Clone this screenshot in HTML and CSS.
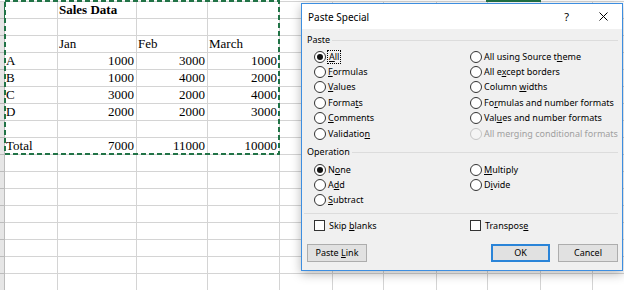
FILE: index.html
```html
<!DOCTYPE html>
<html>
<head>
<meta charset="utf-8">
<link rel="stylesheet" href="styles.css">
</head>
<body>
<div class="page">
  <div class="sheet">
    <div class="stub sel"></div><div class="c"></div><div class="c b">Sales Data</div><div class="c"></div><div class="c"></div><div class="c"></div><div class="c"></div><div class="c"></div><div class="c"></div><div class="c"></div><div class="c"></div><div class="c"></div>
    <div class="stub"></div><div class="c"></div><div class="c"></div><div class="c"></div><div class="c"></div><div class="c"></div><div class="c"></div><div class="c"></div><div class="c"></div><div class="c"></div><div class="c"></div><div class="c"></div>
    <div class="stub"></div><div class="c"></div><div class="c">Jan</div><div class="c">Feb</div><div class="c">March</div><div class="c"></div><div class="c"></div><div class="c"></div><div class="c"></div><div class="c"></div><div class="c"></div><div class="c"></div>
    <div class="stub"></div><div class="c">A</div><div class="c n">1000</div><div class="c n">3000</div><div class="c n">1000</div><div class="c"></div><div class="c"></div><div class="c"></div><div class="c"></div><div class="c"></div><div class="c"></div><div class="c"></div>
    <div class="stub"></div><div class="c">B</div><div class="c n">1000</div><div class="c n">4000</div><div class="c n">2000</div><div class="c"></div><div class="c"></div><div class="c"></div><div class="c"></div><div class="c"></div><div class="c"></div><div class="c"></div>
    <div class="stub"></div><div class="c">C</div><div class="c n">3000</div><div class="c n">2000</div><div class="c n">4000</div><div class="c"></div><div class="c"></div><div class="c"></div><div class="c"></div><div class="c"></div><div class="c"></div><div class="c"></div>
    <div class="stub"></div><div class="c">D</div><div class="c n">2000</div><div class="c n">2000</div><div class="c n">3000</div><div class="c"></div><div class="c"></div><div class="c"></div><div class="c"></div><div class="c"></div><div class="c"></div><div class="c"></div>
    <div class="stub"></div><div class="c"></div><div class="c"></div><div class="c"></div><div class="c"></div><div class="c"></div><div class="c"></div><div class="c"></div><div class="c"></div><div class="c"></div><div class="c"></div><div class="c"></div>
    <div class="stub"></div><div class="c">Total</div><div class="c n">7000</div><div class="c n">11000</div><div class="c n">10000</div><div class="c"></div><div class="c"></div><div class="c"></div><div class="c"></div><div class="c"></div><div class="c"></div><div class="c"></div>
    <div class="stub"></div><div class="c"></div><div class="c"></div><div class="c"></div><div class="c"></div><div class="c"></div><div class="c"></div><div class="c"></div><div class="c"></div><div class="c"></div><div class="c"></div><div class="c"></div>
    <div class="stub"></div><div class="c"></div><div class="c"></div><div class="c"></div><div class="c"></div><div class="c"></div><div class="c"></div><div class="c"></div><div class="c"></div><div class="c"></div><div class="c"></div><div class="c"></div>
    <div class="stub"></div><div class="c"></div><div class="c"></div><div class="c"></div><div class="c"></div><div class="c"></div><div class="c"></div><div class="c"></div><div class="c"></div><div class="c"></div><div class="c"></div><div class="c"></div>
    <div class="stub"></div><div class="c"></div><div class="c"></div><div class="c"></div><div class="c"></div><div class="c"></div><div class="c"></div><div class="c"></div><div class="c"></div><div class="c"></div><div class="c"></div><div class="c"></div>
    <div class="stub"></div><div class="c"></div><div class="c"></div><div class="c"></div><div class="c"></div><div class="c"></div><div class="c"></div><div class="c"></div><div class="c"></div><div class="c"></div><div class="c"></div><div class="c"></div>
    <div class="stub"></div><div class="c"></div><div class="c"></div><div class="c"></div><div class="c"></div><div class="c"></div><div class="c"></div><div class="c"></div><div class="c"></div><div class="c"></div><div class="c"></div><div class="c"></div>
    <div class="stub"></div><div class="c"></div><div class="c"></div><div class="c"></div><div class="c"></div><div class="c"></div><div class="c"></div><div class="c"></div><div class="c"></div><div class="c"></div><div class="c"></div><div class="c"></div>
    <div class="stub"></div><div class="c"></div><div class="c"></div><div class="c"></div><div class="c"></div><div class="c"></div><div class="c"></div><div class="c"></div><div class="c"></div><div class="c"></div><div class="c"></div><div class="c"></div>
  </div>

  <svg class="ants" width="276" height="155" viewBox="0 0 276 155">
    <rect x="1" y="1" width="274" height="153" fill="none" stroke="#217346" stroke-width="2" stroke-dasharray="5 3"/>
  </svg>
  <div class="active-cell"></div>

  <div class="dialog">
    <div class="titlebar">
      <span class="title">Paste Special</span>
      <span class="help">?</span>
      <svg class="close" width="9" height="9" viewBox="0 0 9 9"><path d="M0.5 0.5 L8.5 8.5 M8.5 0.5 L0.5 8.5" stroke="#000" stroke-width="1"/></svg>
    </div>
    <div class="body">
      <div class="group"><span>Paste</span><i class="rule"></i></div>
      <div class="options paste">
        <label class="opt"><span class="radio on"></span><span class="focus"><u>A</u>ll</span></label>
        <label class="opt"><span class="radio"></span><span>All using Source t<u>h</u>eme</span></label>
        <label class="opt"><span class="radio"></span><span><u>F</u>ormulas</span></label>
        <label class="opt"><span class="radio"></span><span>All e<u>x</u>cept borders</span></label>
        <label class="opt"><span class="radio"></span><span><u>V</u>alues</span></label>
        <label class="opt"><span class="radio"></span><span>Column <u>w</u>idths</span></label>
        <label class="opt"><span class="radio"></span><span>Forma<u>t</u>s</span></label>
        <label class="opt"><span class="radio"></span><span>Fo<u>r</u>mulas and number formats</span></label>
        <label class="opt"><span class="radio"></span><span><u>C</u>omments</span></label>
        <label class="opt"><span class="radio"></span><span>Val<u>u</u>es and number formats</span></label>
        <label class="opt"><span class="radio"></span><span>Validatio<u>n</u></span></label>
        <label class="opt off"><span class="radio"></span><span>All merging conditional formats</span></label>
      </div>
      <div class="group op"><span>Operation</span><i class="rule"></i></div>
      <div class="options operation">
        <label class="opt"><span class="radio on"></span><span>N<u>o</u>ne</span></label>
        <label class="opt"><span class="radio"></span><span><u>M</u>ultiply</span></label>
        <label class="opt"><span class="radio"></span><span>A<u>d</u>d</span></label>
        <label class="opt"><span class="radio"></span><span>D<u>i</u>vide</span></label>
        <label class="opt"><span class="radio"></span><span><u>S</u>ubtract</span></label>
      </div>
      <div class="sep"></div>
      <div class="options checks">
        <label class="opt"><span class="check"></span><span>Skip <u>b</u>lanks</span></label>
        <label class="opt"><span class="check"></span><span>Transpos<u>e</u></span></label>
      </div>
      <div class="buttons">
        <button class="btn link">Paste <u>L</u>ink</button>
        <span class="spacer"></span>
        <button class="btn ok">OK</button>
        <button class="btn cancel">Cancel</button>
      </div>
    </div>
  </div>
</div>
</body>
</html>
```

FILE: styles.css
```css
* { box-sizing: border-box; }
html, body { margin: 0; padding: 0; background: #fff; }
.page {
  position: relative;
  width: 624px;
  height: 290px;
  overflow: hidden;
}
.sheet {
  display: grid;
  grid-template-columns: 5px 53px 79px 71px 72px 53px 51px 53px 51px 53px 52px 52px;
  grid-auto-rows: 17px;
  margin-top: 1px;
  border-top: 1px solid #d4d4d4;
  font-family: "Liberation Serif", "Times New Roman", serif;
  font-size: 13px;
  color: #000;
}
.stub {
  background: #e6e6e6;
  border-right: 1px solid #bcbcbc;
  border-bottom: 1px solid #bcbcbc;
}
.stub.sel { border-right-color: #217346; }
.c {
  border-right: 1px solid #d4d4d4;
  border-bottom: 1px solid #d4d4d4;
  line-height: 16px;
  padding: 0 2px 0 1px;
  white-space: nowrap;
  overflow: hidden;
}
.c.b { font-weight: bold; }
.c.n { text-align: right; }

.ants {
  position: absolute;
  left: 4px;
  top: 0;
}
.active-cell {
  position: absolute;
  left: 486px;
  top: -20px;
  width: 55px;
  height: 22px;
  border: 2px solid #217346;
}

.dialog {
  position: absolute;
  left: 301px;
  top: 3px;
  width: 322px;
  height: 268px;
  border: 1px solid #3d8ee0;
  background: #f0f0f0;
  box-shadow: 0 3px 10px rgba(0,0,0,0.28);
  font-family: "Noto Sans", "Open Sans", sans-serif;
  font-size: 9px;
  color: #000;
  display: flex;
  flex-direction: column;
}
.titlebar {
  height: 25px;
  background: #fff;
  display: flex;
  align-items: center;
  padding-left: 6px;
  flex: none;
}
.title { font-size: 10px; flex: 1; }
.help { font-size: 11px; margin-right: 30px; }
.close { margin-right: 14px; }

.body {
  padding: 5px 4px 0 5px;
  display: flex;
  flex-direction: column;
}
.group {
  display: flex;
  align-items: center;
  height: 12px;
  line-height: 12px;
}
.group.op { margin-top: 5px; }
.rule {
  flex: 1;
  border-top: 1px solid #dcdcdc;
  margin-left: 2px;
  margin-top: 1px;
}
.options {
  display: grid;
  grid-template-columns: 156px 1fr;
  padding-left: 7px;
}
.options.paste { margin-top: 3px; grid-auto-rows: 15.4px; }
.options.operation { margin-top: 4px; grid-auto-rows: 15px; }
.options.checks { margin-top: 4px; grid-auto-rows: 15px; }
.opt {
  display: flex;
  align-items: center;
  gap: 2px;
  white-space: nowrap;
  line-height: 12px;
}
.opt.off { color: #a0a0a0; }
.radio {
  width: 12px;
  height: 12px;
  border: 1px solid #333;
  border-radius: 50%;
  background: #fff;
  flex: none;
  display: flex;
  align-items: center;
  justify-content: center;
}
.opt.off .radio { border-color: #c6c6c6; background: #f5f5f5; }
.radio.on::after {
  content: "";
  width: 6px;
  height: 6px;
  border-radius: 50%;
  background: #111;
}
.check {
  width: 11px;
  height: 11px;
  border: 1px solid #333;
  background: #fff;
  flex: none;
  margin-right: 2px;
}
.focus {
  outline: 1px dotted #000;
  outline-offset: 0;
  padding: 0 1px;
}
u { text-decoration: underline; text-underline-offset: 1px; }
.sep {
  margin-top: 6px;
  height: 1px;
  background: #dcdcdc;
  margin-left: -3px;
}
.buttons {
  display: flex;
  margin-top: 11px;
  gap: 8px;
}
.spacer { flex: 1; }
.btn {
  height: 18px;
  font-family: inherit;
  font-size: 9px;
  color: #000;
  background: #e1e1e1;
  border: 1px solid #adadad;
  padding: 0;
  line-height: 14px;
}
.btn.link { width: 60px; }
.btn.ok { width: 59px; border: 2px solid #2a84d8; }
.btn.cancel { width: 60px; }
```
